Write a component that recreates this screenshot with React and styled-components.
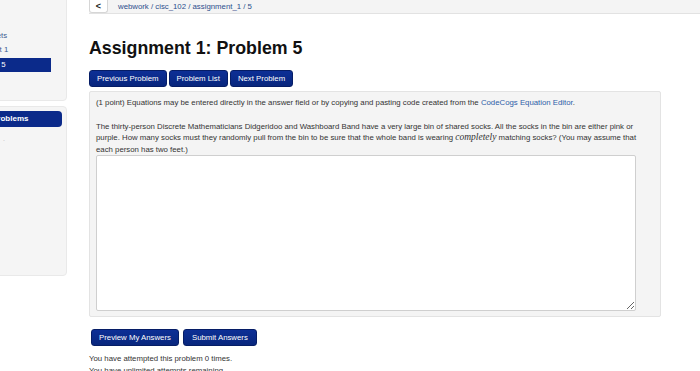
import React from 'react';
import styled, {createGlobalStyle} from 'styled-components';

const GlobalStyle = createGlobalStyle`
    html, body {
        margin: 0;
        padding: 0;
        background: #fff;
        overflow: hidden;
    }
    body {
        font-family: "Liberation Sans", Arial, sans-serif;
        font-size: 7.8px;
        color: #333;
    }
`;

const Page = styled.div`
    display: flex;
    width: 700px;
    height: 371px;
    overflow: hidden;
`;

// Sidebar (mostly off screen to the left)
const Sidebar = styled.div`
    flex: 0 0 127px;
    margin-left: -60px;
    display: flex;
    flex-direction: column;
    gap: 5px;
`;

const SidePanel = styled.div`
    background: #f5f5f5;
    border: 1px solid #e9e9e9;
    border-radius: 4px;
    height: ${(props) => props.h}px;
    margin-top: ${(props) => props.top || 0}px;
    box-sizing: border-box;
    padding: 4px 4px 0 0;
`;

const SideList = styled.ul`
    list-style: none;
    margin: 0;
    padding: 28px 0 0 0;
`;

const SideItem = styled.li`
    height: 14px;
    line-height: 14px;
    margin-top: ${(props) => (props.active ? 1 : 0)}px;
    padding-left: ${(props) => props.indent}px;
    width: ${(props) => (props.active ? 110 - props.indent : 'auto')}px;
    background: ${(props) => (props.active ? '#0b2a8a' : 'transparent')};
    color: ${(props) => (props.active ? '#fff' : '#3d5d92')};
    white-space: nowrap;
`;

const NavButton = styled.div`
    height: 16px;
    line-height: 16px;
    background: #0b2a8a;
    color: #fff;
    font-weight: bold;
    font-size: 8px;
    border-radius: 0 4px 4px 0;
    padding-left: 51px;
    white-space: nowrap;
`;

const SideNote = styled.div`
    color: #bbb;
    padding: 8px 0 0 62px;
    font-size: 7px;
`;

// Main column
const Main = styled.div`
    flex: 1;
    margin-left: 22px;
    display: flex;
    flex-direction: column;
    min-width: 0;
`;

const Crumbs = styled.div`
    display: flex;
    align-items: stretch;
    height: 15px;
    background: #f4f4f4;
    border-bottom: 1px solid #e2e2e2;
`;

const BackButton = styled.div`
    width: 19px;
    background: #fff;
    border: 1px solid #d6d6d6;
    border-top: none;
    border-radius: 0 0 3px 3px;
    box-sizing: border-box;
    display: flex;
    align-items: center;
    justify-content: center;
    font-weight: bold;
    font-size: 9px;
    color: #222;
`;

const CrumbText = styled.div`
    padding-left: 10px;
    line-height: 13px;
    color: #2c4f8c;
`;

const Content = styled.div`
    width: 572px;
    display: flex;
    flex-direction: column;
`;

const Title = styled.h2`
    margin: 22px 0 0 0;
    font-size: 17.8px;
    line-height: 24px;
    font-weight: bold;
    color: #111;
`;

const ButtonRow = styled.div`
    display: flex;
    gap: ${(props) => props.gap}px;
    margin: ${(props) => props.margin};
`;

const Button = styled.button`
    height: 17px;
    padding: 0 ${(props) => props.pad || 7}px;
    background: linear-gradient(#0d2f96, #08267d);
    border: 1px solid #061d66;
    border-radius: 3px;
    color: #fff;
    font-family: "Liberation Sans", Arial, sans-serif;
    font-size: 7.8px;
    line-height: 15px;
    cursor: pointer;
`;

const ProblemPanel = styled.div`
    margin-top: 4px;
    background: #f4f4f4;
    border: 1px solid #e3e3e3;
    border-radius: 2px;
    padding: 5px 0 5px 6px;
    line-height: 11.7px;
    color: #333;
`;

const Para = styled.p`
    margin: 0 ${(props) => props.right || 0}px ${(props) => props.bottom || 0}px 0;
`;

const Link = styled.a`
    color: #2e5ea8;
    text-decoration: none;
`;

const Emph = styled.i`
    font-family: "Liberation Serif", "Times New Roman", serif;
    font-size: 9.5px;
    line-height: 10px;
`;

const Answer = styled.textarea`
    display: block;
    width: 540px;
    height: 156px;
    margin-top: -1px;
    box-sizing: border-box;
    border: 1px solid #cfcfcf;
    border-radius: 2px;
    background: #fff;
    resize: both;
`;

const Status = styled.div`
    margin-top: 7px;
    line-height: 12px;
    color: #333;
`;

const App = () => {
    return (
        <Page>
            <GlobalStyle />
            <Sidebar>
                <SidePanel h={105} top={-4}>
                    <SideList>
                        <SideItem indent={11}>Homework Sets</SideItem>
                        <SideItem indent={20}>Assignment 1</SideItem>
                        <SideItem indent={29} active>
                            Problem 5
                        </SideItem>
                    </SideList>
                </SidePanel>
                <SidePanel h={170}>
                    <NavButton>Problems</NavButton>
                    <SideNote>.</SideNote>
                </SidePanel>
            </Sidebar>
            <Main>
                <Crumbs>
                    <BackButton>&lt;</BackButton>
                    <CrumbText>webwork / cisc_102 / assignment_1 / 5</CrumbText>
                </Crumbs>
                <Content>
                    <Title>Assignment 1: Problem 5</Title>
                    <ButtonRow gap={2} margin="10px 0 0 0">
                        <Button>Previous Problem</Button>
                        <Button>Problem List</Button>
                        <Button>Next Problem</Button>
                    </ButtonRow>
                    <ProblemPanel>
                        <Para bottom={12}>
                            (1 point) Equations may be entered directly in the answer field or by copying and pasting code created from the{' '}
                            <Link href="#">CodeCogs Equation Editor</Link>.
                        </Para>
                        <Para right={20}>
                            The thirty-person Discrete Mathematicians Didgeridoo and Washboard Band have a very large bin of shared socks. All the socks in the bin are either pink or
                            purple. How many socks must they randomly pull from the bin to be sure that the whole band is wearing <Emph>completely</Emph> matching socks? (You may assume that
                            each person has two feet.)
                        </Para>
                        <Answer />
                    </ProblemPanel>
                    <ButtonRow gap={4} margin="12px 0 0 2px">
                        <Button pad={7}>Preview My Answers</Button>
                        <Button pad={8}>Submit Answers</Button>
                    </ButtonRow>
                    <Status>
                        You have attempted this problem 0 times.
                        <br />
                        You have unlimited attempts remaining.
                    </Status>
                </Content>
            </Main>
        </Page>
    );
};

export default App;
